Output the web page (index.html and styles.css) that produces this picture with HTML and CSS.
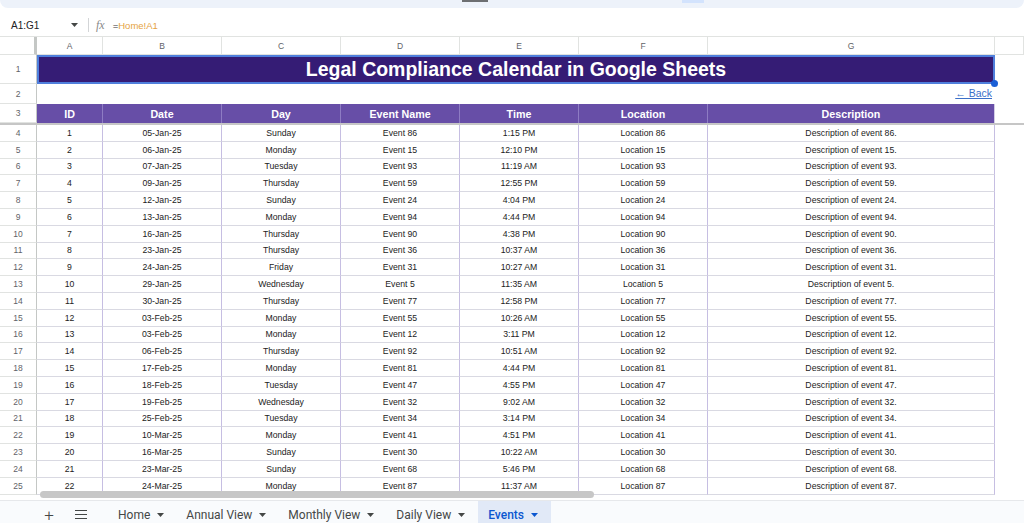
FILE: index.html
```html
<!DOCTYPE html>
<html>
<head>
<meta charset="utf-8">
<link rel="stylesheet" href="styles.css">
</head>
<body>
<div class="toolbar"><span class="tb-a"></span><span class="tb-b"></span></div>
<div class="formula">
  <div class="namebox"><span>A1:G1</span><svg class="nb-arrow" width="7" height="4" viewBox="0 0 7 4"><path d="M0 0h7L3.5 4z"/></svg></div>
  <span class="sep"></span>
  <span class="fx">fx</span>
  <span class="expr"><span class="eq">=</span><span class="ref">Home!A1</span></span>
</div>
<div class="sheet">
  <div class="row colhead">
    <div class="corner"></div>
    <div class="ch">A</div><div class="ch">B</div><div class="ch">C</div><div class="ch">D</div><div class="ch">E</div><div class="ch">F</div><div class="ch">G</div><div class="ch"></div>
  </div>
  <div class="row r1">
    <div class="rh">1</div>
    <div class="title">Legal Compliance Calendar in Google Sheets<span class="handle"></span></div>
    <div class="xc"></div>
  </div>
  <div class="row r2">
    <div class="rh">2</div>
    <div class="backcell"><a class="back" href="#">← Back</a></div>
    <div class="xc"></div>
  </div>
  <div class="row r3">
    <div class="rh">3</div>
    <div class="hc">ID</div><div class="hc">Date</div><div class="hc">Day</div><div class="hc">Event Name</div><div class="hc">Time</div><div class="hc">Location</div><div class="hc last">Description</div>
    <div class="xc"></div>
  </div>
  <div class="freeze"></div>
  <div class="row d"><div class="rh">4</div><div>1</div><div>05-Jan-25</div><div>Sunday</div><div>Event 86</div><div>1:15 PM</div><div>Location 86</div><div>Description of event 86.</div><div class="xc"></div></div>
  <div class="row d"><div class="rh">5</div><div>2</div><div>06-Jan-25</div><div>Monday</div><div>Event 15</div><div>12:10 PM</div><div>Location 15</div><div>Description of event 15.</div><div class="xc"></div></div>
  <div class="row d"><div class="rh">6</div><div>3</div><div>07-Jan-25</div><div>Tuesday</div><div>Event 93</div><div>11:19 AM</div><div>Location 93</div><div>Description of event 93.</div><div class="xc"></div></div>
  <div class="row d"><div class="rh">7</div><div>4</div><div>09-Jan-25</div><div>Thursday</div><div>Event 59</div><div>12:55 PM</div><div>Location 59</div><div>Description of event 59.</div><div class="xc"></div></div>
  <div class="row d"><div class="rh">8</div><div>5</div><div>12-Jan-25</div><div>Sunday</div><div>Event 24</div><div>4:04 PM</div><div>Location 24</div><div>Description of event 24.</div><div class="xc"></div></div>
  <div class="row d"><div class="rh">9</div><div>6</div><div>13-Jan-25</div><div>Monday</div><div>Event 94</div><div>4:44 PM</div><div>Location 94</div><div>Description of event 94.</div><div class="xc"></div></div>
  <div class="row d"><div class="rh">10</div><div>7</div><div>16-Jan-25</div><div>Thursday</div><div>Event 90</div><div>4:38 PM</div><div>Location 90</div><div>Description of event 90.</div><div class="xc"></div></div>
  <div class="row d"><div class="rh">11</div><div>8</div><div>23-Jan-25</div><div>Thursday</div><div>Event 36</div><div>10:37 AM</div><div>Location 36</div><div>Description of event 36.</div><div class="xc"></div></div>
  <div class="row d"><div class="rh">12</div><div>9</div><div>24-Jan-25</div><div>Friday</div><div>Event 31</div><div>10:27 AM</div><div>Location 31</div><div>Description of event 31.</div><div class="xc"></div></div>
  <div class="row d"><div class="rh">13</div><div>10</div><div>29-Jan-25</div><div>Wednesday</div><div>Event 5</div><div>11:35 AM</div><div>Location 5</div><div>Description of event 5.</div><div class="xc"></div></div>
  <div class="row d"><div class="rh">14</div><div>11</div><div>30-Jan-25</div><div>Thursday</div><div>Event 77</div><div>12:58 PM</div><div>Location 77</div><div>Description of event 77.</div><div class="xc"></div></div>
  <div class="row d"><div class="rh">15</div><div>12</div><div>03-Feb-25</div><div>Monday</div><div>Event 55</div><div>10:26 AM</div><div>Location 55</div><div>Description of event 55.</div><div class="xc"></div></div>
  <div class="row d"><div class="rh">16</div><div>13</div><div>03-Feb-25</div><div>Monday</div><div>Event 12</div><div>3:11 PM</div><div>Location 12</div><div>Description of event 12.</div><div class="xc"></div></div>
  <div class="row d"><div class="rh">17</div><div>14</div><div>06-Feb-25</div><div>Thursday</div><div>Event 92</div><div>10:51 AM</div><div>Location 92</div><div>Description of event 92.</div><div class="xc"></div></div>
  <div class="row d"><div class="rh">18</div><div>15</div><div>17-Feb-25</div><div>Monday</div><div>Event 81</div><div>4:44 PM</div><div>Location 81</div><div>Description of event 81.</div><div class="xc"></div></div>
  <div class="row d"><div class="rh">19</div><div>16</div><div>18-Feb-25</div><div>Tuesday</div><div>Event 47</div><div>4:55 PM</div><div>Location 47</div><div>Description of event 47.</div><div class="xc"></div></div>
  <div class="row d"><div class="rh">20</div><div>17</div><div>19-Feb-25</div><div>Wednesday</div><div>Event 32</div><div>9:02 AM</div><div>Location 32</div><div>Description of event 32.</div><div class="xc"></div></div>
  <div class="row d"><div class="rh">21</div><div>18</div><div>25-Feb-25</div><div>Tuesday</div><div>Event 34</div><div>3:14 PM</div><div>Location 34</div><div>Description of event 34.</div><div class="xc"></div></div>
  <div class="row d"><div class="rh">22</div><div>19</div><div>10-Mar-25</div><div>Monday</div><div>Event 41</div><div>4:51 PM</div><div>Location 41</div><div>Description of event 41.</div><div class="xc"></div></div>
  <div class="row d"><div class="rh">23</div><div>20</div><div>16-Mar-25</div><div>Sunday</div><div>Event 30</div><div>10:22 AM</div><div>Location 30</div><div>Description of event 30.</div><div class="xc"></div></div>
  <div class="row d"><div class="rh">24</div><div>21</div><div>23-Mar-25</div><div>Sunday</div><div>Event 68</div><div>5:46 PM</div><div>Location 68</div><div>Description of event 68.</div><div class="xc"></div></div>
  <div class="row d"><div class="rh">25</div><div>22</div><div>24-Mar-25</div><div>Monday</div><div>Event 87</div><div>11:37 AM</div><div>Location 87</div><div>Description of event 87.</div><div class="xc"></div></div>
  <div class="hscroll"></div>
</div>
<div class="tabs">
  <span class="plus">+</span>
  <span class="menu"><svg width="12" height="9" viewBox="0 0 12 9"><path d="M0 .5h12M0 4.5h12M0 8.5h12" stroke="#444746" stroke-width="1.2"/></svg></span>
  <div class="tab">Home<svg class="arr" width="7" height="4" viewBox="0 0 7 4"><path d="M0 0h7L3.5 4z"/></svg></div>
  <div class="tab">Annual View<svg class="arr" width="7" height="4" viewBox="0 0 7 4"><path d="M0 0h7L3.5 4z"/></svg></div>
  <div class="tab">Monthly View<svg class="arr" width="7" height="4" viewBox="0 0 7 4"><path d="M0 0h7L3.5 4z"/></svg></div>
  <div class="tab">Daily View<svg class="arr" width="7" height="4" viewBox="0 0 7 4"><path d="M0 0h7L3.5 4z"/></svg></div>
  <div class="tab active">Events<svg class="arr" width="7" height="4" viewBox="0 0 7 4"><path d="M0 0h7L3.5 4z"/></svg></div>
</div>
</body>
</html>
```

FILE: styles.css
```css
* { box-sizing: border-box; margin: 0; padding: 0; }
html, body {
  width: 1024px;
  height: 523px;
  overflow: hidden;
  background: #fff;
  font-family: "Liberation Sans", Arial, sans-serif;
  color: #222;
}

/* top toolbar remnant */
.toolbar {
  height: 8px;
  background: #edf2fa;
  border-radius: 0 0 16px 16px;
  display: flex;
  align-items: flex-start;
  padding-left: 462px;
}
.tb-a { width: 26px; height: 2px; background: #6d6f72; }
.tb-b { width: 22px; height: 3px; background: #d3e3fd; margin-left: 194px; }

/* formula bar */
.formula {
  margin-top: 6px;
  height: 22px;
  display: flex;
  align-items: center;
  font-size: 10px;
  color: #202124;
}
.namebox {
  width: 78px;
  padding-left: 11px;
  display: flex;
  align-items: center;
  justify-content: space-between;
}
.nb-arrow { fill: #444746; }
.sep { width: 1px; height: 14px; background: #d3d5d7; margin-left: 10px; margin-right: 7px; }
.fx { font-family: "Liberation Serif", serif; font-style: italic; color: #8a8a8a; font-size: 12px; margin-right: 8px; }
.expr { font-size: 9.5px; }
.eq { color: #333; }
.ref { color: #e5a23e; }

/* sheet grid */
.sheet {
  position: relative;
  height: 464px;
  overflow: hidden;
}
.row {
  display: grid;
  grid-template-columns: 37px 66px 119px 119px 119px 119px 129px 287px 29px;
}
.row > div {
  display: flex;
  align-items: center;
  justify-content: center;
  white-space: nowrap;
}

.colhead { height: 19px; border-top: 1px solid #e1e3e1; }
.colhead .corner { border-right: 3px solid #c4c7c5; border-bottom: 1px solid #e1e3e1; }
.ch {
  font-size: 8.5px;
  color: #5f6368;
  border-right: 1px solid #e1e3e1;
  border-bottom: 1px solid #e1e3e1;
  padding-top: 1px;
}

.rh {
  font-size: 8.5px;
  color: #5f6368;
  border-right: 1px solid #c4c7c5;
  border-bottom: 1px solid #e1e3e1;
}

.r1 { height: 29px; }
.title {
  grid-column: 2 / span 7;
  position: relative;
  background: #351c75;
  border: 2px solid #4f7fdc;
  color: #fff;
  font-weight: bold;
  font-size: 19.5px;
}
.handle {
  position: absolute;
  right: -5px;
  bottom: -5px;
  width: 7px;
  height: 7px;
  border-radius: 50%;
  background: #1a5fd6;
}

.r2 { height: 20px; }
.row > .backcell {
  grid-column: 2 / span 7;
  justify-content: flex-end;
  align-items: flex-end;
  padding: 0 3px 5px 0;
}
.back {
  color: #3b6fc9;
  font-size: 10.5px;
  text-decoration: underline;
}

.r3 { height: 19px; }
.hc {
  background: #674ea7;
  color: #fff;
  font-weight: bold;
  font-size: 10.7px;
  border-right: 1px solid #8e7cc3;
}
.hc.last { border-right: 1px solid #d3cde6; }

.freeze { height: 2px; background: #c6c6c6; }

.d { height: 16.8px; font-size: 8.7px; color: #222; }
.d > div {
  border-right: 1px solid #c6bee2;
  border-bottom: 1px solid #d9d9e2;
}
.d > .rh {
  color: #5f6368;
  border-right: 1px solid #c4c7c5;
  border-bottom: 1px solid #e1e3e1;
}
.row > .xc { border: none; }

.hscroll {
  position: absolute;
  left: 40px;
  top: 455px;
  width: 554px;
  height: 7px;
  border-radius: 4px;
  background: #c7c7c7;
}

/* sheet tabs */
.tabs {
  height: 23px;
  background: #f9fbfd;
  border-top: 1px solid #e6e8eb;
  display: flex;
  align-items: stretch;
  padding-left: 40px;
  font-family: Roboto, "Open Sans", sans-serif;
  font-size: 12px;
  font-weight: 400;
  color: #444746;
}
.plus, .menu {
  width: 18px;
  display: flex;
  align-items: center;
  justify-content: center;
  padding-top: 5px;
}
.plus { font-size: 17px; font-weight: 300; }
.menu { margin-left: 14px; margin-right: 17px; }
.tab {
  display: flex;
  align-items: center;
  gap: 7px;
  padding: 6px 11px 0 11px;
}
.arr { fill: #444746; }
.tab.active {
  background: #e1e9f7;
  color: #0b57d0;
  font-weight: 500;
  padding: 6px 13px 0 10px;
  margin-left: 2px;
}
.tab.active .arr { fill: #0b57d0; }
```
